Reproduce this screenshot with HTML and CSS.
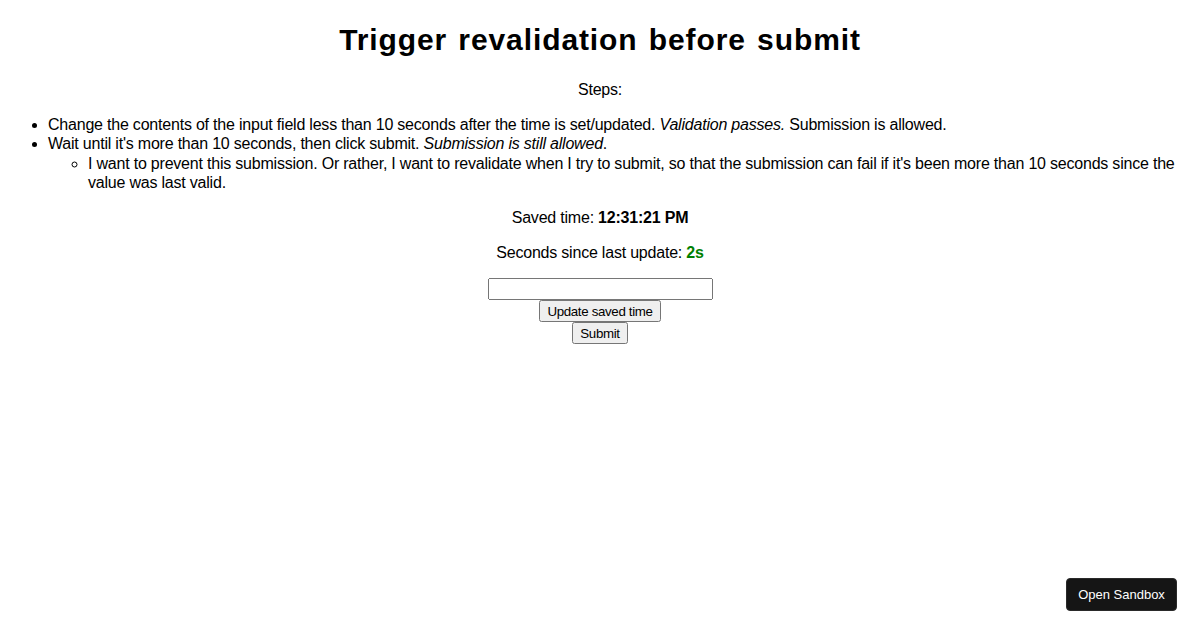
FILE: index.html
```html
<!DOCTYPE html>
<html>
<head>
<meta charset="utf-8">
<link rel="stylesheet" href="styles.css">
</head>
<body>
<div class="app">
  <h1 class="title">Trigger revalidation before submit</h1>
  <p class="center">Steps:</p>
  <ul class="steps">
    <li>Change the contents of the input field less than 10 seconds after the time is set/updated. <em>Validation passes.</em> Submission is allowed.</li>
    <li>Wait until it's more than 10 seconds, then click submit. <em>Submission is still allowed</em>.
      <ul class="sub">
        <li>I want to prevent this submission. Or rather, I want to revalidate when I try to submit, so that the submission can fail if it's been more than 10 seconds since the value was last valid.</li>
      </ul>
    </li>
  </ul>
  <p class="center">Saved time: <strong>12:31:21 PM</strong></p>
  <p class="center">Seconds since last update: <strong class="ok">2s</strong></p>
  <form class="form">
    <input class="field" type="text">
    <button class="btn" type="button">Update saved time</button>
    <button class="btn" type="submit">Submit</button>
  </form>
</div>
<button class="sandbox" type="button">Open Sandbox</button>
</body>
</html>
```
FILE: styles.css
```css
html, body {
  background: #fff;
}
body {
  margin: 0;
  font-family: "Liberation Sans", Arial, sans-serif;
  font-size: 16px;
  line-height: 1.2;
  letter-spacing: -0.21px;
  color: #000;
}
.app {
  padding: 0 8px;
}
.title {
  text-align: center;
  font-size: 30px;
  line-height: 38px;
  letter-spacing: 0.9px;
  word-spacing: 2px;
  margin: 21px 0;
}
p {
  margin: 16px 0;
}
.center {
  text-align: center;
}
.steps {
  margin: 16px 0;
  padding-left: 40px;
}
.sub {
  list-style: circle;
  padding-left: 40px;
}
.ok {
  color: green;
}
.form {
  display: flex;
  flex-direction: column;
  align-items: center;
}
.field {
  width: 225px;
  height: 22px;
  box-sizing: border-box;
  margin: 0;
  font-family: "Liberation Sans", Arial, sans-serif;
  font-size: 13.333px;
}
.btn {
  margin: 0;
  height: 22px;
  box-sizing: border-box;
  padding: 1px 6px;
  font-family: "Liberation Sans", Arial, sans-serif;
  font-size: 13.333px;
  letter-spacing: -0.35px;
}
.sandbox {
  position: fixed;
  right: 23px;
  bottom: 19px;
  width: 111px;
  height: 33px;
  background: #151515;
  color: #fff;
  border: 1px solid #2a2a2a;
  border-radius: 4px;
  font-family: "Liberation Sans", Arial, sans-serif;
  font-size: 13px;
  letter-spacing: 0;
  padding: 0;
}
```
